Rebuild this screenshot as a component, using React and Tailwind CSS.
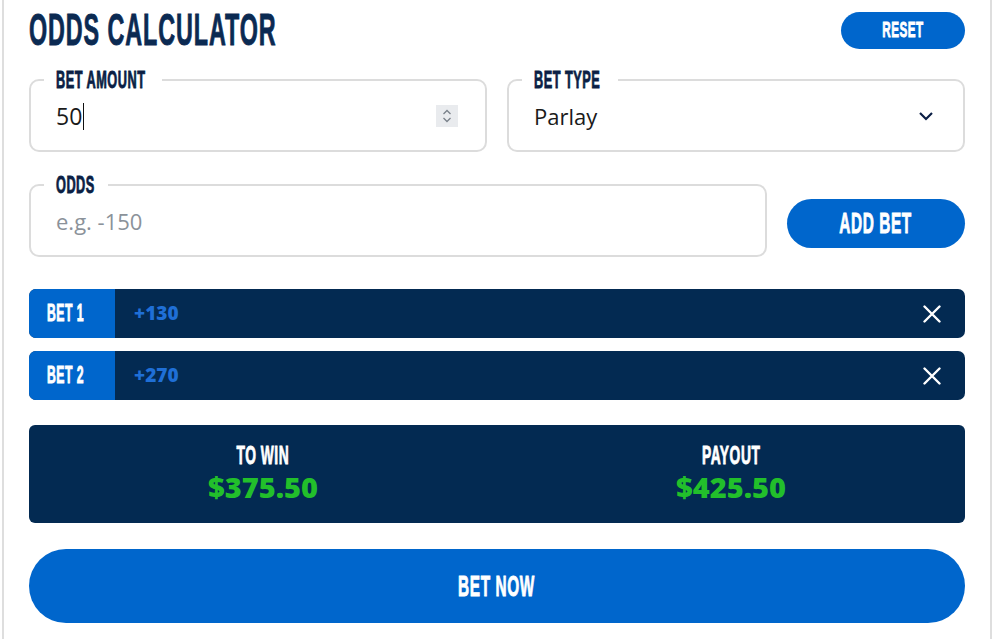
import React, { useState } from 'react';

const bebas = "font-['Liberation_Sans',Arial,sans-serif] font-bold";
const openSans = "font-['Open_Sans','Liberation_Sans',sans-serif]";

// Condensed headline text, squeezed horizontally to look like the display face
const Cond = ({ children, center }) => (
    <span
        className={
            'inline-block whitespace-nowrap tracking-[0.04em] scale-x-[0.53] [-webkit-text-stroke:0.9px_currentColor] ' +
            (center ? 'origin-center' : 'origin-left')
        }
    >
        {children}
    </span>
);

const Field = ({ label, legendWidth, children }) => (
    <fieldset className="border-2 border-[#dcdcdc] rounded-[10px] px-[25px] pb-[10px] min-w-0">
        <legend
            className={`${bebas} -ml-3 px-3 text-[24px] leading-6 text-[#0b1f45] overflow-visible`}
            style={{ width: legendWidth }}
        >
            <Cond>{label}</Cond>
        </legend>
        <div className="h-[48px] flex items-center">{children}</div>
    </fieldset>
);

const XIcon = () => (
    <svg width="18" height="18" viewBox="0 0 18 18" fill="none">
        <path d="M1.5 1.5L16.5 16.5M16.5 1.5L1.5 16.5" stroke="white" strokeWidth="2.4" strokeLinecap="round" />
    </svg>
);

const BetRow = ({ n, odds }) => (
    <div className="flex h-[49px] rounded-[7px] overflow-hidden bg-[#032a52]">
        <div className={`${bebas} w-[86px] bg-[#0066cc] pl-[18px] flex items-center text-white text-[23px] leading-none`}>
            <Cond>BET {n}</Cond>
        </div>
        <div className={`${openSans} flex-1 flex items-center pl-[19px] text-[19px] font-extrabold text-[#1f6fd6]`}>
            {odds}
        </div>
        <button className="pr-[24px] flex items-center">
            <XIcon />
        </button>
    </div>
);

const Result = ({ label, value }) => (
    <div className="flex flex-col items-center justify-center gap-[4px] pb-[6px]">
        <div className={`${bebas} text-white text-[26px] leading-none`}>
            <Cond center>{label}</Cond>
        </div>
        <div className={`${openSans} font-extrabold text-[29px] leading-none text-[#22bf2b]`}>{value}</div>
    </div>
);

const App = () => {
    const [bets] = useState([
        { n: 1, odds: '+130' },
        { n: 2, odds: '+270' },
    ]);

    return (
        <div className="w-[996px] h-[639px] bg-white overflow-hidden">
            <div className="ml-[2px] w-[990px] h-full border-x-2 border-[#dedede] px-[25px] pt-[6px]">
                {/* header */}
                <div className="flex justify-between items-center h-[48px]">
                    <h1 className={`${bebas} text-[44px] leading-none text-[#0b2a52]`}>
                        <Cond>ODDS CALCULATOR</Cond>
                    </h1>
                    <button className={`${bebas} w-[124px] h-[37px] rounded-full bg-[#0066cc] text-white text-[22px] leading-none`}>
                        <Cond center>RESET</Cond>
                    </button>
                </div>

                {/* amount + type */}
                <div className="mt-[14px] grid grid-cols-2 gap-[20px]">
                    <Field label="BET AMOUNT" legendWidth="118px">
                        <div className={`${openSans} flex-1 flex items-center text-[23px] text-[#1a1a1a]`}>
                            50
                            <span className="ml-px w-px h-[27px] bg-[#111]" />
                        </div>
                        <div className="w-[22px] h-[22px] bg-[#e9ebee] flex flex-col items-center justify-center gap-[2px] mr-[2px]">
                            <svg width="10" height="6" viewBox="0 0 10 6" fill="none">
                                <path d="M1.5 5L5 1.5L8.5 5" stroke="#7a818a" strokeWidth="1.3" />
                            </svg>
                            <svg width="10" height="6" viewBox="0 0 10 6" fill="none">
                                <path d="M1.5 1L5 4.5L8.5 1" stroke="#7a818a" strokeWidth="1.3" />
                            </svg>
                        </div>
                    </Field>
                    <Field label="BET TYPE" legendWidth="96px">
                        <div className={`${openSans} flex-1 text-[22px] text-[#1a1a1a]`}>Parlay</div>
                        <svg width="16" height="10" viewBox="0 0 16 10" fill="none" className="mr-[4px]">
                            <path d="M2 2L8 8L14 2" stroke="#0b1f45" strokeWidth="2.2" />
                        </svg>
                    </Field>
                </div>

                {/* odds + add */}
                <div className="mt-[21px] flex items-end gap-[20px]">
                    <div className="flex-1">
                        <Field label="ODDS" legendWidth="64px">
                            <div className={`${openSans} text-[22px] text-[#8b929a]`}>e.g. -150</div>
                        </Field>
                    </div>
                    <button className={`${bebas} w-[178px] h-[49px] mb-[9px] rounded-full bg-[#0066cc] text-white text-[29px] leading-none`}>
                        <Cond center>ADD BET</Cond>
                    </button>
                </div>

                {/* bets */}
                <div className="mt-[32px] flex flex-col gap-[13px]">
                    {bets.map((b) => (
                        <BetRow key={b.n} n={b.n} odds={b.odds} />
                    ))}
                </div>

                {/* result */}
                <div className="mt-[25px] h-[98px] rounded-[6px] bg-[#032a52] grid grid-cols-2">
                    <Result label="TO WIN" value="$375.50" />
                    <Result label="PAYOUT" value="$425.50" />
                </div>

                <button className={`${bebas} mt-[26px] w-full h-[74px] rounded-full bg-[#0066cc] text-white text-[29px] leading-none`}>
                    <Cond center>BET NOW</Cond>
                </button>
            </div>
        </div>
    );
};

export default App;
